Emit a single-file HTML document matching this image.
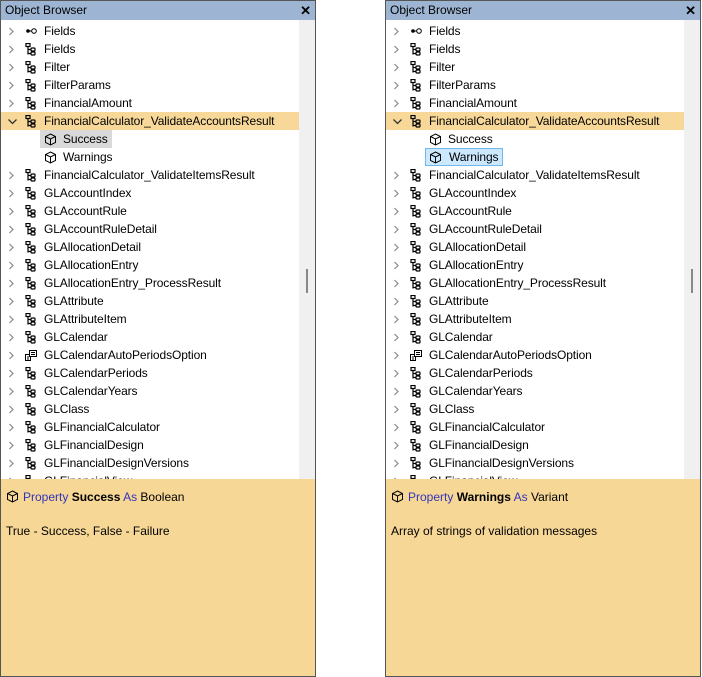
<!DOCTYPE html>
<html><head><meta charset="utf-8"><style>
*{margin:0;padding:0;box-sizing:border-box}
body{width:702px;height:677px;background:#fff;position:relative;overflow:hidden;font-family:"Liberation Sans",sans-serif;font-size:12px;color:#000}
.p{position:absolute;top:0;width:316px;height:677px;border:1px solid #555;background:#fff}
.t{position:absolute;left:0;top:0;width:314px;height:19px;background:#9db5d3;font-size:12px;line-height:19px;padding-left:4px}
.x{position:absolute;right:4px;top:0;font-weight:bold;font-size:13px}
.sb{position:absolute;left:298px;top:19px;width:16px;height:460px;background:#f0f0f0}
.th{position:absolute;left:7px;top:249px;width:2px;height:24px;background:#888}
.list{position:absolute;left:0;top:19px;width:298px;height:459px;overflow:hidden}
.r{position:absolute;left:0;height:18px;width:298px;line-height:18px;white-space:nowrap;letter-spacing:-0.1px}
.r.hl{background:#f7d898}
.ch{position:absolute;left:7px;top:5px}
.ic{position:absolute;left:24px;top:3px}
.tx{position:absolute;left:43px}
.sel{position:absolute;left:39px;top:0;height:18px;padding:0 4px 0 23px;line-height:18px}
.sel svg{position:absolute;left:4px;top:3px}
.bot{position:absolute;left:0;top:478px;width:314px;height:197px;background:#f6d796}
.l1{position:absolute;left:5px;top:11px}
.l1 svg{vertical-align:-2px;margin-right:4px}
.b{color:#3333bb}
.l2{position:absolute;left:5px;top:45px}
</style></head><body>
<svg width="0" height="0" style="position:absolute">
<defs>
<g id="tb"><rect x="1" y="0.5" width="4" height="3" fill="none" stroke="#000" stroke-width="1.2"/><path d="M3 3.5v8M3 6.5h3M3 10.5h3" stroke="#000" fill="none" stroke-width="1.2"/><rect x="6" y="5" width="4" height="3" rx="1" fill="none" stroke="#000" stroke-width="1.2"/><rect x="6" y="9" width="4" height="3" rx="1" fill="none" stroke="#000" stroke-width="1.2"/></g>
<g id="cube"><path d="M6.5 1L11.5 3.5V9.5L6.5 12L1.5 9.5V3.5Z M1.5 3.5L6.5 6L11.5 3.5 M6.5 6V12" fill="none" stroke="#000"/></g>
<g id="key"><circle cx="3" cy="6" r="1.8" fill="#000"/><path d="M3 6h4" stroke="#000"/><circle cx="9" cy="6" r="2.3" fill="none" stroke="#000"/></g>
<g id="en"><rect x="0.5" y="5.5" width="5" height="6" fill="none" stroke="#000"/><rect x="4.5" y="1.5" width="7" height="6" fill="#fff" stroke="#000"/><path d="M6 3.5h4M6 5.5h4M2 8h2M2 10h2" stroke="#000"/></g>
<g id="cr"><path d="M1.5 1L5 4.5L1.5 8" fill="none" stroke="#888" stroke-width="1.2"/></g>
<g id="cd"><path d="M0.5 2.5L4.5 6.5L8.5 2.5" fill="none" stroke="#333" stroke-width="1.3"/></g>
</defs></svg>

<div class="p" style="left:0">
<div class="t">Object Browser<span class="x">✕</span></div>
<div class="sb"><div class="th"></div></div>
<div class="list">
<div class="r" style="top:2px"><svg class="ch" width="9" height="9"><use href="#cr"/></svg><svg class="ic" width="13" height="13"><use href="#key"/></svg><span class="tx">Fields</span></div>
<div class="r" style="top:20px"><svg class="ch" width="9" height="9"><use href="#cr"/></svg><svg class="ic" width="13" height="13"><use href="#tb"/></svg><span class="tx">Fields</span></div>
<div class="r" style="top:38px"><svg class="ch" width="9" height="9"><use href="#cr"/></svg><svg class="ic" width="13" height="13"><use href="#tb"/></svg><span class="tx">Filter</span></div>
<div class="r" style="top:56px"><svg class="ch" width="9" height="9"><use href="#cr"/></svg><svg class="ic" width="13" height="13"><use href="#tb"/></svg><span class="tx">FilterParams</span></div>
<div class="r" style="top:74px"><svg class="ch" width="9" height="9"><use href="#cr"/></svg><svg class="ic" width="13" height="13"><use href="#tb"/></svg><span class="tx">FinancialAmount</span></div>
<div class="r hl" style="top:92px"><svg class="ch" width="9" height="9"><use href="#cd"/></svg><svg class="ic" width="13" height="13"><use href="#tb"/></svg><span class="tx">FinancialCalculator_ValidateAccountsResult</span></div>
<div class="r" style="top:110px"><span class="sel" style="background:#d9d9d9"><svg width="13" height="13"><use href="#cube"/></svg>Success</span></div>
<div class="r" style="top:128px"><span class="sel"><svg width="13" height="13"><use href="#cube"/></svg>Warnings</span></div>
<div class="r" style="top:146px"><svg class="ch" width="9" height="9"><use href="#cr"/></svg><svg class="ic" width="13" height="13"><use href="#tb"/></svg><span class="tx">FinancialCalculator_ValidateItemsResult</span></div>
<div class="r" style="top:164px"><svg class="ch" width="9" height="9"><use href="#cr"/></svg><svg class="ic" width="13" height="13"><use href="#tb"/></svg><span class="tx">GLAccountIndex</span></div>
<div class="r" style="top:182px"><svg class="ch" width="9" height="9"><use href="#cr"/></svg><svg class="ic" width="13" height="13"><use href="#tb"/></svg><span class="tx">GLAccountRule</span></div>
<div class="r" style="top:200px"><svg class="ch" width="9" height="9"><use href="#cr"/></svg><svg class="ic" width="13" height="13"><use href="#tb"/></svg><span class="tx">GLAccountRuleDetail</span></div>
<div class="r" style="top:218px"><svg class="ch" width="9" height="9"><use href="#cr"/></svg><svg class="ic" width="13" height="13"><use href="#tb"/></svg><span class="tx">GLAllocationDetail</span></div>
<div class="r" style="top:236px"><svg class="ch" width="9" height="9"><use href="#cr"/></svg><svg class="ic" width="13" height="13"><use href="#tb"/></svg><span class="tx">GLAllocationEntry</span></div>
<div class="r" style="top:254px"><svg class="ch" width="9" height="9"><use href="#cr"/></svg><svg class="ic" width="13" height="13"><use href="#tb"/></svg><span class="tx">GLAllocationEntry_ProcessResult</span></div>
<div class="r" style="top:272px"><svg class="ch" width="9" height="9"><use href="#cr"/></svg><svg class="ic" width="13" height="13"><use href="#tb"/></svg><span class="tx">GLAttribute</span></div>
<div class="r" style="top:290px"><svg class="ch" width="9" height="9"><use href="#cr"/></svg><svg class="ic" width="13" height="13"><use href="#tb"/></svg><span class="tx">GLAttributeItem</span></div>
<div class="r" style="top:308px"><svg class="ch" width="9" height="9"><use href="#cr"/></svg><svg class="ic" width="13" height="13"><use href="#tb"/></svg><span class="tx">GLCalendar</span></div>
<div class="r" style="top:326px"><svg class="ch" width="9" height="9"><use href="#cr"/></svg><svg class="ic" width="13" height="13"><use href="#en"/></svg><span class="tx">GLCalendarAutoPeriodsOption</span></div>
<div class="r" style="top:344px"><svg class="ch" width="9" height="9"><use href="#cr"/></svg><svg class="ic" width="13" height="13"><use href="#tb"/></svg><span class="tx">GLCalendarPeriods</span></div>
<div class="r" style="top:362px"><svg class="ch" width="9" height="9"><use href="#cr"/></svg><svg class="ic" width="13" height="13"><use href="#tb"/></svg><span class="tx">GLCalendarYears</span></div>
<div class="r" style="top:380px"><svg class="ch" width="9" height="9"><use href="#cr"/></svg><svg class="ic" width="13" height="13"><use href="#tb"/></svg><span class="tx">GLClass</span></div>
<div class="r" style="top:398px"><svg class="ch" width="9" height="9"><use href="#cr"/></svg><svg class="ic" width="13" height="13"><use href="#tb"/></svg><span class="tx">GLFinancialCalculator</span></div>
<div class="r" style="top:416px"><svg class="ch" width="9" height="9"><use href="#cr"/></svg><svg class="ic" width="13" height="13"><use href="#tb"/></svg><span class="tx">GLFinancialDesign</span></div>
<div class="r" style="top:434px"><svg class="ch" width="9" height="9"><use href="#cr"/></svg><svg class="ic" width="13" height="13"><use href="#tb"/></svg><span class="tx">GLFinancialDesignVersions</span></div>
<div class="r" style="top:452px"><svg class="ch" width="9" height="9"><use href="#cr"/></svg><svg class="ic" width="13" height="13"><use href="#tb"/></svg><span class="tx">GLFinancialView</span></div>
</div>
<div class="bot">
<div class="l1"><svg width="13" height="13"><use href="#cube"/></svg><span class="b">Property</span> <b>Success</b> <span class="b">As</span> Boolean</div>
<div class="l2">True - Success, False - Failure</div>
</div>
</div>

<div class="p" style="left:385px">
<div class="t">Object Browser<span class="x">✕</span></div>
<div class="sb"><div class="th"></div></div>
<div class="list">
<div class="r" style="top:2px"><svg class="ch" width="9" height="9"><use href="#cr"/></svg><svg class="ic" width="13" height="13"><use href="#key"/></svg><span class="tx">Fields</span></div>
<div class="r" style="top:20px"><svg class="ch" width="9" height="9"><use href="#cr"/></svg><svg class="ic" width="13" height="13"><use href="#tb"/></svg><span class="tx">Fields</span></div>
<div class="r" style="top:38px"><svg class="ch" width="9" height="9"><use href="#cr"/></svg><svg class="ic" width="13" height="13"><use href="#tb"/></svg><span class="tx">Filter</span></div>
<div class="r" style="top:56px"><svg class="ch" width="9" height="9"><use href="#cr"/></svg><svg class="ic" width="13" height="13"><use href="#tb"/></svg><span class="tx">FilterParams</span></div>
<div class="r" style="top:74px"><svg class="ch" width="9" height="9"><use href="#cr"/></svg><svg class="ic" width="13" height="13"><use href="#tb"/></svg><span class="tx">FinancialAmount</span></div>
<div class="r hl" style="top:92px"><svg class="ch" width="9" height="9"><use href="#cd"/></svg><svg class="ic" width="13" height="13"><use href="#tb"/></svg><span class="tx">FinancialCalculator_ValidateAccountsResult</span></div>
<div class="r" style="top:110px"><span class="sel"><svg width="13" height="13"><use href="#cube"/></svg>Success</span></div>
<div class="r" style="top:128px"><span class="sel" style="background:#cce8ff;border:1px solid #70b8f0;line-height:16px"><svg width="13" height="13" style="top:2px;left:3px"><use href="#cube"/></svg>Warnings</span></div>
<div class="r" style="top:146px"><svg class="ch" width="9" height="9"><use href="#cr"/></svg><svg class="ic" width="13" height="13"><use href="#tb"/></svg><span class="tx">FinancialCalculator_ValidateItemsResult</span></div>
<div class="r" style="top:164px"><svg class="ch" width="9" height="9"><use href="#cr"/></svg><svg class="ic" width="13" height="13"><use href="#tb"/></svg><span class="tx">GLAccountIndex</span></div>
<div class="r" style="top:182px"><svg class="ch" width="9" height="9"><use href="#cr"/></svg><svg class="ic" width="13" height="13"><use href="#tb"/></svg><span class="tx">GLAccountRule</span></div>
<div class="r" style="top:200px"><svg class="ch" width="9" height="9"><use href="#cr"/></svg><svg class="ic" width="13" height="13"><use href="#tb"/></svg><span class="tx">GLAccountRuleDetail</span></div>
<div class="r" style="top:218px"><svg class="ch" width="9" height="9"><use href="#cr"/></svg><svg class="ic" width="13" height="13"><use href="#tb"/></svg><span class="tx">GLAllocationDetail</span></div>
<div class="r" style="top:236px"><svg class="ch" width="9" height="9"><use href="#cr"/></svg><svg class="ic" width="13" height="13"><use href="#tb"/></svg><span class="tx">GLAllocationEntry</span></div>
<div class="r" style="top:254px"><svg class="ch" width="9" height="9"><use href="#cr"/></svg><svg class="ic" width="13" height="13"><use href="#tb"/></svg><span class="tx">GLAllocationEntry_ProcessResult</span></div>
<div class="r" style="top:272px"><svg class="ch" width="9" height="9"><use href="#cr"/></svg><svg class="ic" width="13" height="13"><use href="#tb"/></svg><span class="tx">GLAttribute</span></div>
<div class="r" style="top:290px"><svg class="ch" width="9" height="9"><use href="#cr"/></svg><svg class="ic" width="13" height="13"><use href="#tb"/></svg><span class="tx">GLAttributeItem</span></div>
<div class="r" style="top:308px"><svg class="ch" width="9" height="9"><use href="#cr"/></svg><svg class="ic" width="13" height="13"><use href="#tb"/></svg><span class="tx">GLCalendar</span></div>
<div class="r" style="top:326px"><svg class="ch" width="9" height="9"><use href="#cr"/></svg><svg class="ic" width="13" height="13"><use href="#en"/></svg><span class="tx">GLCalendarAutoPeriodsOption</span></div>
<div class="r" style="top:344px"><svg class="ch" width="9" height="9"><use href="#cr"/></svg><svg class="ic" width="13" height="13"><use href="#tb"/></svg><span class="tx">GLCalendarPeriods</span></div>
<div class="r" style="top:362px"><svg class="ch" width="9" height="9"><use href="#cr"/></svg><svg class="ic" width="13" height="13"><use href="#tb"/></svg><span class="tx">GLCalendarYears</span></div>
<div class="r" style="top:380px"><svg class="ch" width="9" height="9"><use href="#cr"/></svg><svg class="ic" width="13" height="13"><use href="#tb"/></svg><span class="tx">GLClass</span></div>
<div class="r" style="top:398px"><svg class="ch" width="9" height="9"><use href="#cr"/></svg><svg class="ic" width="13" height="13"><use href="#tb"/></svg><span class="tx">GLFinancialCalculator</span></div>
<div class="r" style="top:416px"><svg class="ch" width="9" height="9"><use href="#cr"/></svg><svg class="ic" width="13" height="13"><use href="#tb"/></svg><span class="tx">GLFinancialDesign</span></div>
<div class="r" style="top:434px"><svg class="ch" width="9" height="9"><use href="#cr"/></svg><svg class="ic" width="13" height="13"><use href="#tb"/></svg><span class="tx">GLFinancialDesignVersions</span></div>
<div class="r" style="top:452px"><svg class="ch" width="9" height="9"><use href="#cr"/></svg><svg class="ic" width="13" height="13"><use href="#tb"/></svg><span class="tx">GLFinancialView</span></div>
</div>
<div class="bot">
<div class="l1"><svg width="13" height="13"><use href="#cube"/></svg><span class="b">Property</span> <b>Warnings</b> <span class="b">As</span> Variant</div>
<div class="l2">Array of strings of validation messages</div>
</div>
</div>
</body></html>
